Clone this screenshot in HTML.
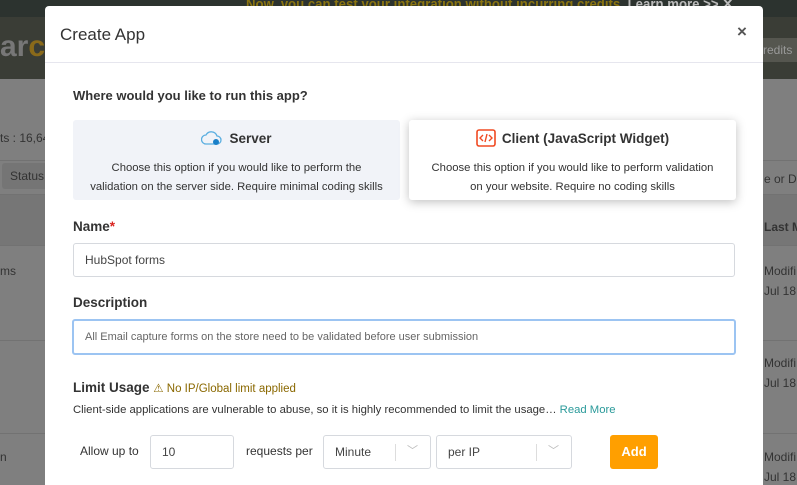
<!DOCTYPE html>
<html><head><style>
*{box-sizing:border-box;margin:0;padding:0}
html,body{width:797px;height:485px;overflow:hidden}
body{background:#7f7f7f;font-family:"Liberation Sans",sans-serif;position:relative;color:#333}
.abs{position:absolute;white-space:nowrap}
.bg{color:#333;font-size:12px}
.modal{position:absolute;left:45px;top:6px;width:718px;height:479px;background:#fff;border-radius:4px 4px 0 0;overflow:hidden}
.in{position:absolute;border:1px solid #d6d9de;border-radius:3px;background:#fff;font-size:12px;color:#444;padding-left:11px;display:flex;align-items:center}
.lbl{font-size:13.5px;font-weight:bold;color:#333}
.card{position:absolute;top:114px;height:80px;width:327px;text-align:center;border-radius:3px}
.card .t{font-size:13.5px;font-weight:bold;color:#333;margin-top:8px;height:20px;display:flex;align-items:center;justify-content:center;gap:6px}
.card .d{font-size:11.3px;line-height:19px;color:#333;margin-top:11px}
</style></head><body>
<div class="abs" style="left:0;top:0;width:797px;height:17px;background:#2c332f"></div>
<div class="abs" style="left:246px;top:-5px;font-size:15px;font-weight:bold;color:#8a7411;transform:scaleX(0.88);transform-origin:left">Now, you can test your integration without incurring credits. <span style="color:#bbb">Learn more &gt;&gt; ✕</span></div>
<div class="abs" style="left:0;top:17px;width:797px;height:62px;background:#3a3d36"></div>
<div class="abs" style="left:0;top:30px;font-size:30px;font-weight:bold;color:#777">ar<span style="color:#8a6a1a">c</span></div>
<div class="abs" style="left:760px;top:38px;width:37px;height:24px;background:#55564f;color:#999;font-size:12px;padding:5px 3px;overflow:hidden">redits</div>
<div class="abs bg" style="left:0;top:131px">ts : 16,64</div>
<div class="abs" style="left:0;top:160px;width:797px;border-top:1px solid #727272"></div>
<div class="abs" style="left:2px;top:163px;width:50px;height:26px;background:#757575;border-radius:3px;font-size:12px;padding:6px 8px">Status:</div>
<div class="abs bg" style="left:764px;top:172px">e or Do</div>
<div class="abs" style="left:0;top:194px;width:797px;height:52px;background:#767676;border-top:1px solid #727272;border-bottom:1px solid #727272"></div>
<div class="abs bg" style="left:764px;top:220px;font-weight:bold">Last M</div>
<div class="abs bg" style="left:0;top:264px">ms</div>
<div class="abs bg" style="left:764px;top:264px">Modifi</div>
<div class="abs bg" style="left:764px;top:284px">Jul 18 1</div>
<div class="abs" style="left:0;top:340px;width:797px;border-top:1px solid #727272"></div>
<div class="abs bg" style="left:764px;top:356px">Modifi</div>
<div class="abs bg" style="left:764px;top:376px">Jul 18 1</div>
<div class="abs" style="left:0;top:433px;width:797px;border-top:1px solid #727272"></div>
<div class="abs bg" style="left:0;top:450px">n</div>
<div class="abs bg" style="left:764px;top:450px">Modifi</div>
<div class="abs bg" style="left:764px;top:470px">Jul 18 1</div>

<div class="modal">
<div class="abs" style="left:15px;top:19px;font-size:17px;color:#333">Create App</div>
<div class="abs" style="left:692px;top:16px;font-size:17px;font-weight:bold;color:#555">×</div>
<div class="abs" style="left:0;top:56px;width:718px;border-top:1px solid #e6e6ee"></div>
<div class="abs" style="left:28px;top:82px;font-size:13px;font-weight:bold;color:#333">Where would you like to run this app?</div>
<div class="card" style="left:28px;background:#f1f3f8">
 <div class="t"><svg width="22" height="16" viewBox="0 0 22 16"><path d="M5 14h11a4 4 0 0 0 0-8 6 6 0 0 0-11-1 4.5 4.5 0 0 0 0 9z" fill="none" stroke="#5aaee0" stroke-width="1.3"/><circle cx="15" cy="12" r="3" fill="#1a7fc8"/></svg>Server</div>
 <div class="d">Choose this option if you would like to perform the<br>validation on the server side. Require minimal coding skills</div>
</div>
<div class="card" style="left:364px;background:#fff;box-shadow:0 2px 10px rgba(0,0,0,.25)">
 <div class="t"><svg width="20" height="18" viewBox="0 0 20 18"><rect x="1" y="1" width="18" height="16" rx="2" fill="none" stroke="#f04a22" stroke-width="1.6"/><path d="M7 6l-3 3 3 3M13 6l3 3-3 3M11 5l-2 8" fill="none" stroke="#f04a22" stroke-width="1.4"/></svg>Client (JavaScript Widget)</div>
 <div class="d">Choose this option if you would like to perform validation<br>on your website. Require no coding skills</div>
</div>
<div class="abs lbl" style="left:28px;top:213px">Name<span style="color:#d9231f">*</span></div>
<div class="in" style="left:28px;top:237px;width:662px;height:34px">HubSpot forms</div>
<div class="abs lbl" style="left:28px;top:289px">Description</div>
<div class="in" style="left:27px;top:313px;width:664px;height:36px;border:2px solid #9cc4f2;color:#666;font-size:11px">All Email capture forms on the store need to be validated before user submission</div>
<div class="abs lbl" style="left:28px;top:374px">Limit Usage <span style="color:#8a6800;font-weight:normal;font-size:11.5px">⚠ No IP/Global limit applied</span></div>
<div class="abs" style="left:28px;top:398px;font-size:11.3px;color:#333">Client-side applications are vulnerable to abuse, so it is highly recommended to limit the usage… <span style="color:#2a9a9a">Read More</span></div>
<div class="abs" style="left:35px;top:438px;font-size:12px">Allow up to</div>
<div class="in" style="left:105px;top:429px;width:84px;height:34px">10</div>
<div class="abs" style="left:201px;top:438px;font-size:12px">requests per</div>
<div class="in" style="left:278px;top:429px;width:108px;height:34px">Minute<span style="position:absolute;left:71px;top:8px;height:17px;border-left:1px solid #ddd"></span><span style="position:absolute;left:83px;top:6px;color:#bbb;font-size:11px">﹀</span></div>
<div class="in" style="left:391px;top:429px;width:136px;height:34px">per IP<span style="position:absolute;left:99px;top:8px;height:17px;border-left:1px solid #ddd"></span><span style="position:absolute;left:111px;top:6px;color:#bbb;font-size:11px">﹀</span></div>
<div class="abs" style="left:565px;top:429px;width:48px;height:34px;background:#ff9f00;border-radius:3px;color:#fff;font-weight:bold;font-size:13px;text-align:center;line-height:34px">Add</div>
</div>
</body></html>
